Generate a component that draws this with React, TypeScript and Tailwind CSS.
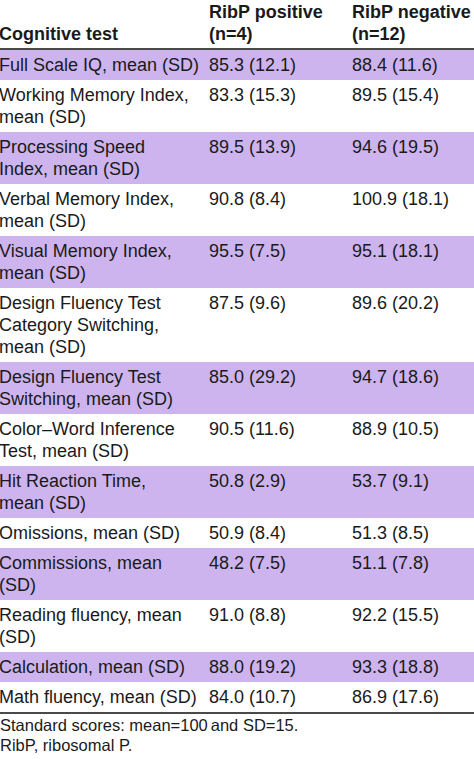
import React from "react";

type Row = { label: string[]; pos: string; neg: string };

const rows: Row[] = [
  { label: ["Full Scale IQ, mean (SD)"], pos: "85.3 (12.1)", neg: "88.4 (11.6)" },
  { label: ["Working Memory Index,", "mean (SD)"], pos: "83.3 (15.3)", neg: "89.5 (15.4)" },
  { label: ["Processing Speed", "Index, mean (SD)"], pos: "89.5 (13.9)", neg: "94.6 (19.5)" },
  { label: ["Verbal Memory Index,", "mean (SD)"], pos: "90.8 (8.4)", neg: "100.9 (18.1)" },
  { label: ["Visual Memory Index,", "mean (SD)"], pos: "95.5 (7.5)", neg: "95.1 (18.1)" },
  { label: ["Design Fluency Test", "Category Switching,", "mean (SD)"], pos: "87.5 (9.6)", neg: "89.6 (20.2)" },
  { label: ["Design Fluency Test", "Switching, mean (SD)"], pos: "85.0 (29.2)", neg: "94.7 (18.6)" },
  { label: ["Color\u2013Word Inference", "Test, mean (SD)"], pos: "90.5 (11.6)", neg: "88.9 (10.5)" },
  { label: ["Hit Reaction Time,", "mean (SD)"], pos: "50.8 (2.9)", neg: "53.7 (9.1)" },
  { label: ["Omissions, mean (SD)"], pos: "50.9 (8.4)", neg: "51.3 (8.5)" },
  { label: ["Commissions, mean", "(SD)"], pos: "48.2 (7.5)", neg: "51.1 (7.8)" },
  { label: ["Reading fluency, mean", "(SD)"], pos: "91.0 (8.8)", neg: "92.2 (15.5)" },
  { label: ["Calculation, mean (SD)"], pos: "88.0 (19.2)", neg: "93.3 (18.8)" },
  { label: ["Math fluency, mean (SD)"], pos: "84.0 (10.7)", neg: "86.9 (17.6)" },
];

export default function App() {
  return (
    <div
      className="w-[474px] h-[759px] overflow-hidden bg-white text-[#1a1a1a]"
      style={{ fontFamily: '"Liberation Sans", Arial, sans-serif' }}
    >
      {/* Header */}
      <div className="grid grid-cols-[209px_143px_1fr] h-[48px] pt-[1px] text-[18px] leading-[22px] font-bold">
        <div className="pt-[22px] -ml-[1px] whitespace-nowrap">Cognitive test</div>
        <div className="whitespace-nowrap">
          RibP positive
          <br />
          (n=4)
        </div>
        <div className="whitespace-nowrap">
          RibP negative
          <br />
          (n=12)
        </div>
      </div>
      <div className="h-[2px] bg-[#4a4a4a]" />

      {/* Body */}
      {rows.map((r, i) => (
        <div
          key={i}
          className={
            "grid grid-cols-[209px_143px_1fr] pt-[4px] pb-[4px] text-[18px] leading-[22px] " +
            (i % 2 === 0 ? "bg-[#cdb4ef]" : "bg-white")
          }
        >
          <div className="-ml-[1px] whitespace-nowrap">
            {r.label.map((l, j) => (
              <div key={j}>{l}</div>
            ))}
          </div>
          <div className="whitespace-nowrap">{r.pos}</div>
          <div className="whitespace-nowrap">{r.neg}</div>
        </div>
      ))}
      <div className="h-[2px] bg-[#4a4a4a]" />

      {/* Footnotes */}
      <div className="pt-[1px] text-[16.5px] leading-[20px]">
        <div className="whitespace-nowrap">
          Standard scores: mean=100<span className="ml-[3px]">and SD=15.</span>
        </div>
        <div className="whitespace-nowrap">RibP, ribosomal P.</div>
      </div>
    </div>
  );
}
